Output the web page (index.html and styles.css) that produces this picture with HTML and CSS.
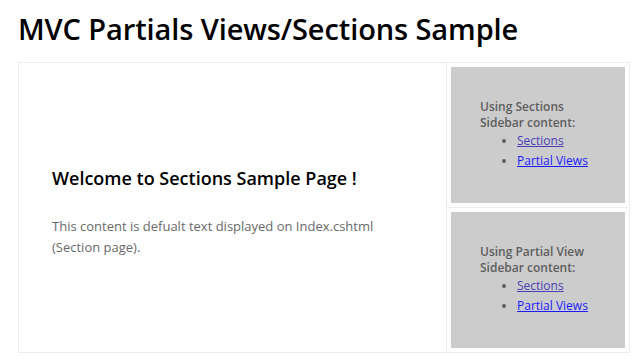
FILE: index.html
```html
<!DOCTYPE html>
<html>
<head>
<meta charset="utf-8">
<link rel="stylesheet" href="styles.css">
</head>
<body>
<div class="page">
  <h1 class="title">MVC Partials Views/Sections Sample</h1>
  <div class="layout">
    <div class="main">
      <div class="main-inner">
        <h2 class="welcome">Welcome to Sections Sample Page !</h2>
        <p class="intro">This content is defualt text displayed on Index.cshtml<br>(Section page).</p>
      </div>
    </div>
    <div class="side">
      <div class="cell cell-top">
        <div class="box">
          <div class="box-inner">
            <div class="box-title">Using Sections<br>Sidebar content:</div>
            <ul class="links">
              <li><a class="visited" href="#">Sections</a></li>
              <li><a class="fresh" href="#">Partial Views</a></li>
            </ul>
          </div>
        </div>
      </div>
      <div class="cell">
        <div class="box">
          <div class="box-inner">
            <div class="box-title">Using Partial View<br>Sidebar content:</div>
            <ul class="links">
              <li><a class="visited" href="#">Sections</a></li>
              <li><a class="fresh" href="#">Partial Views</a></li>
            </ul>
          </div>
        </div>
      </div>
    </div>
  </div>
</div>
</body>
</html>
```
FILE: styles.css
```css
html, body {
  margin: 0;
  padding: 0;
  background: #ffffff;
}
body {
  font-family: "Open Sans", "DejaVu Sans", sans-serif;
}
.page {
  padding: 0 0 0 18px;
}
.title {
  margin: 0;
  padding-top: 9px;
  height: 62px;
  box-sizing: border-box;
  font-size: 29px;
  line-height: 40px;
  font-weight: 600;
  color: #000;
  letter-spacing: -0.1px;
}
.layout {
  display: flex;
  width: 610px;
  height: 289px;
  border: 1px solid #e8eef4;
}
.main {
  width: 427px;
  border-right: 1px solid #e8eef4;
  display: flex;
  align-items: center;
}
.main-inner {
  padding: 8px 0 0 33px;
}
.welcome {
  margin: 0 0 26px 0;
  font-size: 18px;
  line-height: 24px;
  font-weight: 600;
  color: #000;
}
.intro {
  margin: 0;
  font-size: 13px;
  line-height: 21px;
  color: #696969;
}
.side {
  width: 182px;
  display: flex;
  flex-direction: column;
}
.cell {
  flex: 1;
  padding: 4px;
  display: flex;
}
.cell-top {
  border-bottom: 1px solid #e8eef4;
}
.box {
  flex: 1;
  background: #cccccc;
  display: flex;
  align-items: center;
}
.box-inner {
  padding: 0 0 0 29px;
}
.box-title {
  font-size: 12px;
  line-height: 16px;
  font-weight: 600;
  color: #5e5e5e;
}
.links {
  margin: 0;
  padding: 0 0 0 37px;
  color: #5e5e5e;
  font-size: 12px;
}
.links li {
  line-height: 20px;
}
.links a {
  font-size: 12px;
}
.visited {
  color: #4b3fb8;
}
.fresh {
  color: #1a1aff;
}
```
